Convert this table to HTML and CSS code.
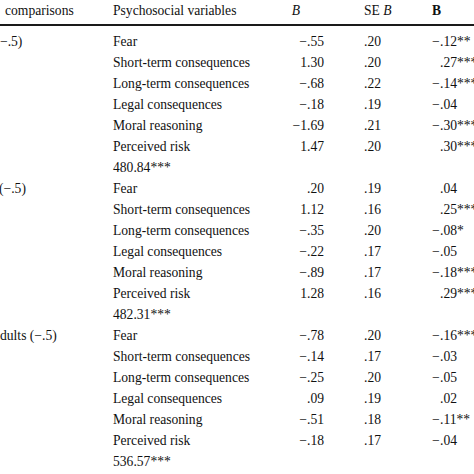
FILE: index.html
```html
<!DOCTYPE html>
<html>
<head>
<meta charset="utf-8">
<link rel="stylesheet" href="styles.css">
</head>
<body>
<table class="tbl">
  <colgroup>
    <col class="c-group"><col class="c-var"><col class="c-b"><col class="c-se"><col class="c-beta">
  </colgroup>
  <thead>
    <tr class="head">
      <th class="grp">comparisons</th>
      <th class="var">Psychosocial variables</th>
      <th class="num hb"><i>B</i></th>
      <th class="se">SE <i>B</i></th>
      <th class="beta"><b>B</b></th>
    </tr>
  </thead>
  <tbody>
    <tr class="first"><td class="grp">−.5)</td><td class="var">Fear</td><td class="num">−.55</td><td class="se">.20</td><td class="beta"><span class="sg">−</span>.12**</td></tr>
    <tr><td class="grp"></td><td class="var">Short-term consequences</td><td class="num">1.30</td><td class="se">.20</td><td class="beta"><span class="sg"></span>.27***</td></tr>
    <tr><td class="grp"></td><td class="var">Long-term consequences</td><td class="num">−.68</td><td class="se">.22</td><td class="beta"><span class="sg">−</span>.14***</td></tr>
    <tr><td class="grp"></td><td class="var">Legal consequences</td><td class="num">−.18</td><td class="se">.19</td><td class="beta"><span class="sg">−</span>.04</td></tr>
    <tr><td class="grp"></td><td class="var">Moral reasoning</td><td class="num">−1.69</td><td class="se">.21</td><td class="beta"><span class="sg">−</span>.30***</td></tr>
    <tr><td class="grp"></td><td class="var">Perceived risk</td><td class="num">1.47</td><td class="se">.20</td><td class="beta"><span class="sg"></span>.30***</td></tr>
    <tr><td class="grp"></td><td class="var">480.84***</td><td class="num"></td><td class="se"></td><td class="beta"></td></tr>
    <tr><td class="grp cut">(−.5)</td><td class="var">Fear</td><td class="num">.20</td><td class="se">.19</td><td class="beta"><span class="sg"></span>.04</td></tr>
    <tr><td class="grp"></td><td class="var">Short-term consequences</td><td class="num">1.12</td><td class="se">.16</td><td class="beta"><span class="sg"></span>.25***</td></tr>
    <tr><td class="grp"></td><td class="var">Long-term consequences</td><td class="num">−.35</td><td class="se">.20</td><td class="beta"><span class="sg">−</span>.08*</td></tr>
    <tr><td class="grp"></td><td class="var">Legal consequences</td><td class="num">−.22</td><td class="se">.17</td><td class="beta"><span class="sg">−</span>.05</td></tr>
    <tr><td class="grp"></td><td class="var">Moral reasoning</td><td class="num">−.89</td><td class="se">.17</td><td class="beta"><span class="sg">−</span>.18***</td></tr>
    <tr><td class="grp"></td><td class="var">Perceived risk</td><td class="num">1.28</td><td class="se">.16</td><td class="beta"><span class="sg"></span>.29***</td></tr>
    <tr><td class="grp"></td><td class="var">482.31***</td><td class="num"></td><td class="se"></td><td class="beta"></td></tr>
    <tr><td class="grp">dults (−.5)</td><td class="var">Fear</td><td class="num">−.78</td><td class="se">.20</td><td class="beta"><span class="sg">−</span>.16***</td></tr>
    <tr><td class="grp"></td><td class="var">Short-term consequences</td><td class="num">−.14</td><td class="se">.17</td><td class="beta"><span class="sg">−</span>.03</td></tr>
    <tr><td class="grp"></td><td class="var">Long-term consequences</td><td class="num">−.25</td><td class="se">.20</td><td class="beta"><span class="sg">−</span>.05</td></tr>
    <tr><td class="grp"></td><td class="var">Legal consequences</td><td class="num">.09</td><td class="se">.19</td><td class="beta"><span class="sg"></span>.02</td></tr>
    <tr><td class="grp"></td><td class="var">Moral reasoning</td><td class="num">−.51</td><td class="se">.18</td><td class="beta"><span class="sg">−</span>.11**</td></tr>
    <tr><td class="grp"></td><td class="var">Perceived risk</td><td class="num">−.18</td><td class="se">.17</td><td class="beta"><span class="sg">−</span>.04</td></tr>
    <tr><td class="grp"></td><td class="var">536.57***</td><td class="num"></td><td class="se"></td><td class="beta"></td></tr>
  </tbody>
</table>
</body>
</html>
```
FILE: styles.css
```css
html, body {
  margin: 0;
  padding: 0;
  background: #ffffff;
  overflow: hidden;
  width: 474px;
  height: 474px;
}
.tbl {
  border-collapse: collapse;
  table-layout: fixed;
  width: 480px;
  font-family: "Liberation Serif", "Times New Roman", serif;
  font-size: 13.6px;
  color: #111111;
}
.c-group { width: 113px; }
.c-var { width: 150px; }
.c-b { width: 61px; }
.c-se { width: 108px; }
.c-beta { width: 48px; }
th, td {
  padding: 0;
  white-space: nowrap;
  overflow: visible;
  height: 21px;
  line-height: 21px;
  text-align: left;
  font-weight: normal;
  vertical-align: middle;
}
.head th {
  height: 21px;
  padding-bottom: 3px;
  border-bottom: 2px solid #1a1a1a;
}
.head .grp { padding-left: 5px; }
.head .hb { padding-right: 24px; }
.head .beta b { font-weight: bold; }
.first td { padding-top: 5px; }
.num { text-align: right; }
.se { padding-left: 40px; }
.sg {
  display: inline-block;
  width: 8px;
}
.cut { text-indent: -1px; }
```
